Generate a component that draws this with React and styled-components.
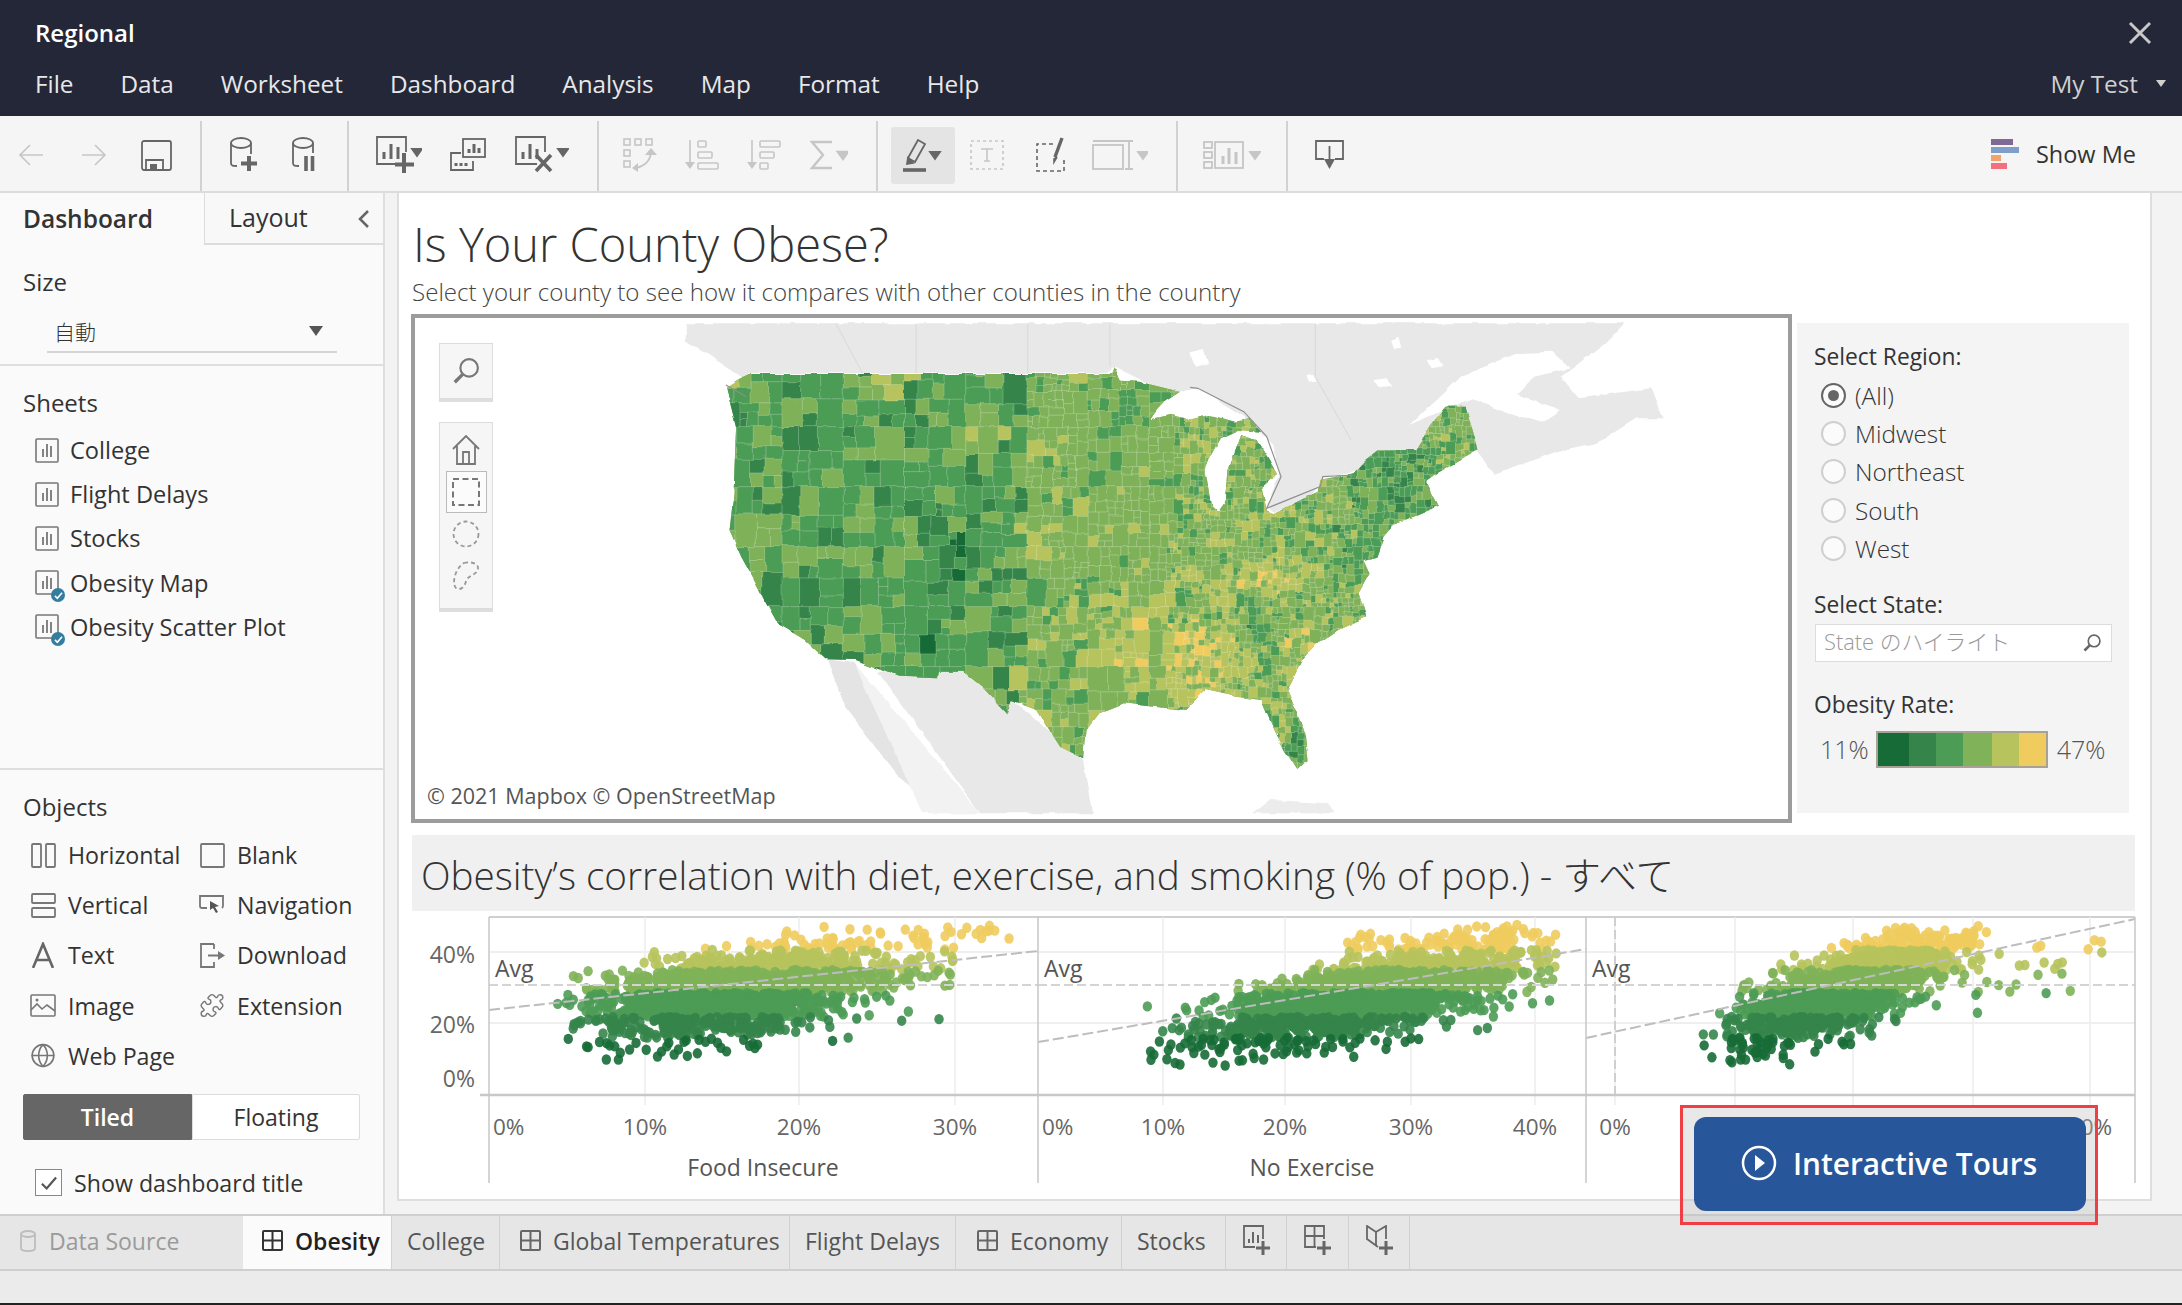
import styled, { createGlobalStyle } from "styled-components";
import { Globe, Puzzle } from "lucide-react";

const FONT = `"Open Sans", "Noto Sans CJK JP", sans-serif`;
const PALETTE = ["#176b36", "#35854b", "#4c9c55", "#7fb259", "#b7c35c", "#f0cc5e"];

const GlobalStyle = createGlobalStyle`
  html, body {
    margin: 0;
    padding: 0;
    width: 2182px;
    height: 1305px;
    overflow: hidden;
    background: #f3f3f3;
    font-family: ${FONT};
    color: #333;
  }
  * { box-sizing: border-box; }
`;

const Page = styled.div`
  position: relative;
  width: 2182px;
  height: 1305px;
  display: flex;
  flex-direction: column;
  border-bottom: 2px solid #222;
  overflow: hidden;
`;

/* ---------- top bar ---------- */
const TopBar = styled.header`
  height: 116px;
  flex: none;
  background: #232738;
  color: #fff;
  padding: 0 16px 0 35px;
  display: flex;
  flex-direction: column;
`;

const TitleRow = styled.div`
  height: 65px;
  display: flex;
  align-items: center;
  justify-content: space-between;
`;

const AppTitle = styled.div`
  font-size: 24px;
  font-weight: 600;
  margin-top: -1px;
`;

const CloseIcon = styled.svg`
  width: 24px;
  height: 24px;
  margin-right: 14px;
`;

const MenuRow = styled.nav`
  height: 36px;
  display: flex;
  align-items: center;
  gap: 47px;
  font-size: 24.3px;
  color: #e8e8e8;
`;

const UserMenu = styled.div`
  margin-left: auto;
  display: flex;
  align-items: center;
  gap: 18px;
  color: #d0d0d0;

  &::after {
    content: "";
    border-left: 5px solid transparent;
    border-right: 5px solid transparent;
    border-top: 7px solid #d0d0d0;
  }
`;

/* ---------- tool bar ---------- */
const ToolBar = styled.div`
  height: 77px;
  flex: none;
  background: #f5f5f5;
  display: flex;
  align-items: flex-start;
  border-bottom: 2px solid #dcdcdc;
`;

const ToolSlot = styled.div`
  width: ${(p) => p.$w}px;
  height: 76px;
  padding-top: 2px;
  flex: none;
  display: flex;
  align-items: center;
  justify-content: center;
`;

const ToolSep = styled.div`
  width: ${(p) => 2 + (p.$pad || 0)}px;
  height: 70px;
  margin-top: 5px;
  flex: none;
  border-right: 2px solid #d2d2d2;
`;

const HighlightBox = styled.div`
  width: 64px;
  height: 57px;
  margin: 11px 0 0 13px;
  flex: none;
  background: #e4e4e4;
  border-radius: 3px;
  display: flex;
  align-items: center;
  justify-content: center;
`;

const ShowMe = styled.div`
  margin: 0 46px 0 auto;
  height: 76px;
  display: flex;
  align-items: center;
  gap: 17px;
  font-size: 23.5px;
  color: #333;
`;

const ShowMeBars = styled.div`
  width: 28px;
  display: flex;
  flex-direction: column;
  gap: 2px;
`;

const ShowMeBar = styled.div`
  height: 6px;
  width: ${(p) => p.$w}px;
  background: ${(p) => p.$c};
`;

/* ---------- main ---------- */
const Main = styled.div`
  height: 1021px;
  flex: none;
  display: flex;
  align-items: flex-start;
  background: #f3f3f3;
`;

const SidePanel = styled.aside`
  width: 385px;
  height: 1021px;
  flex: none;
  background: #fafafa;
  border-right: 2px solid #dedede;
  display: flex;
  flex-direction: column;
`;

const SideTabs = styled.div`
  height: 52px;
  display: flex;
  flex: none;
`;

const SideTab = styled.div`
  width: ${(p) => (p.$active ? 204 : 179)}px;
  padding: 0 0 2px ${(p) => (p.$active ? 23 : 24)}px;
  font-size: ${(p) => (p.$active ? 24.5 : 25)}px;
  display: flex;
  align-items: center;
  position: relative;
  font-weight: ${(p) => (p.$active ? 600 : 400)};
  ${(p) => !p.$active && "border-left: 1px solid #dcdcdc; border-bottom: 2px solid #dcdcdc; background: #f8f8f8;"}
`;

const Collapse = styled.svg`
  position: absolute;
  right: 13px;
  top: 16px;
  width: 12px;
  height: 20px;
`;

const SideSection = styled.section`
  height: ${(p) => p.$h}px;
  flex: none;
  padding-top: ${(p) => p.$top || 0}px;
  ${(p) => p.$line && "border-bottom: 2px solid #dedede;"}
`;

const SideLabel = styled.div`
  font-size: 24px;
  font-weight: 500;
  height: 30px;
  line-height: 30px;
  padding-left: 23px;
  color: #333;
`;

const SizeSelect = styled.div`
  margin: 15px 46px 0 47px;
  height: 41px;
  border-bottom: 2px solid #d4d4d4;
  display: flex;
  align-items: center;
  justify-content: space-between;
  padding: 0 14px 2px 7px;
  font-size: 21px;
  font-weight: 300;

  &::after {
    content: "";
    border-left: 7px solid transparent;
    border-right: 7px solid transparent;
    border-top: 10px solid #555;
  }
`;

const SheetList = styled.div`
  margin-top: 10px;
  display: flex;
  flex-direction: column;
`;

const SheetRow = styled.div`
  height: 44.2px;
  display: flex;
  align-items: center;
  gap: 11px;
  padding-left: 35px;
  font-size: 23.6px;
`;

const SheetIconWrap = styled.div`
  position: relative;
  width: 24px;
  height: 25px;
  flex: none;
`;

const Badge = styled.div`
  position: absolute;
  right: -6px;
  bottom: -7px;
  width: 14px;
  height: 14px;
  border-radius: 50%;
  background: #357d9f;
  display: flex;
  align-items: center;
  justify-content: center;
`;

const ObjectGrid = styled.div`
  margin-top: 8px;
  padding-left: 30px;
  display: grid;
  grid-template-columns: 169px 170px;
  grid-auto-rows: 50.2px;
`;

const ObjectItem = styled.div`
  display: flex;
  align-items: center;
  gap: 12px;
  font-size: 23.2px;
  white-space: nowrap;
`;

const ObjectIcon = styled.div`
  width: 26px;
  height: 30px;
  flex: none;
  display: flex;
  align-items: center;
  justify-content: center;
`;

const Toggle = styled.div`
  margin: 13px 0 0 23px;
  width: 337px;
  height: 46px;
  display: flex;
  font-size: 23px;
`;

const ToggleOption = styled.div`
  flex: ${(p) => (p.$on ? "0 0 169px" : "1")};
  display: flex;
  align-items: center;
  justify-content: center;
  background: ${(p) => (p.$on ? "#666" : "#fff")};
  color: ${(p) => (p.$on ? "#fff" : "#333")};
  font-weight: ${(p) => (p.$on ? 600 : 400)};
  border: 1px solid ${(p) => (p.$on ? "#666" : "#dcdcdc")};
  border-radius: ${(p) => (p.$on ? "2px 0 0 2px" : "0 2px 2px 0")};
`;

const TitleCheck = styled.div`
  margin: 27px 0 0 35px;
  display: flex;
  align-items: center;
  gap: 12px;
  font-size: 23.2px;
`;

const CheckBox = styled.div`
  width: 27px;
  height: 27px;
  background: #fff;
  border: 1.5px solid #888;
  display: flex;
  align-items: center;
  justify-content: center;
`;

/* ---------- dashboard canvas ---------- */
const Canvas = styled.main`
  width: 1755px;
  height: 1008px;
  margin-left: 12px;
  background: #fff;
  border: 2px solid #dedede;
  border-top: 0;
  display: flex;
  flex-direction: column;
  padding-left: 12px;
`;

const Heading = styled.div`
  height: 121px;
  flex: none;
  padding-left: 1px;
  display: flex;
  flex-direction: column;
`;

const DashTitle = styled.h1`
  margin: 23px 0 0 1px;
  font-size: 47px;
  line-height: 56px;
  font-weight: 300;
  color: #333;
`;

const DashSub = styled.div`
  margin-top: 5px;
  font-size: 24.1px;
  line-height: 30px;
  font-weight: 300;
  color: #444;
`;

const MapRow = styled.div`
  display: flex;
  align-items: flex-start;
  flex: none;
`;

const MapFrame = styled.div`
  position: relative;
  width: 1381px;
  height: 509px;
  flex: none;
  border: 4px solid #9c9c9c;
  overflow: hidden;
  background: #fff;
`;

const MapSvg = styled.svg`
  display: block;
`;

const ToolCard = styled.div`
  position: absolute;
  left: 24px;
  top: ${(p) => p.$top}px;
  width: 54px;
  height: ${(p) => p.$h}px;
  padding-top: ${(p) => p.$padTop || 0}px;
  background: #f6f6f6;
  border: 1px solid #dcdcdc;
  box-shadow: 0 3px 0 #dedede;
  display: flex;
  flex-direction: column;
  align-items: center;
  justify-content: ${(p) => p.$justify || "center"};
`;

const MapToolBtn = styled.div`
  width: 41px;
  height: 42px;
  flex: none;
  display: flex;
  align-items: center;
  justify-content: center;
  border: 1px solid ${(p) => (p.$on ? "#bbb" : "transparent")};
  background: ${(p) => (p.$on ? "#fbfbfb" : "transparent")};
`;

const Attribution = styled.div`
  position: absolute;
  left: 9px;
  bottom: 8px;
  padding: 0 3px;
  font-size: 21.5px;
  line-height: 30px;
  color: #555;
  background: rgba(255, 255, 255, 0.75);
`;

const FilterPanel = styled.div`
  width: 332px;
  height: 490px;
  margin: 9px 0 0 5px;
  padding: 20px 0 0 17px;
  background: #f4f4f4;
  flex: none;
`;

const FilterLabel = styled.div`
  font-size: 22.8px;
  line-height: 28px;
  font-weight: 500;
  color: #333;
  margin-top: ${(p) => p.$mt || 0}px;
`;

const RadioRow = styled.div`
  height: 38.4px;
  display: flex;
  align-items: center;
  gap: 9px;
  padding-left: 7px;
  font-size: 24.3px;
  font-weight: 300;
  color: #333;
`;

const RadioDot = styled.div`
  width: 25px;
  height: 25px;
  border-radius: 50%;
  background: #fbfbfb;
  border: 2.5px solid ${(p) => (p.$on ? "#666" : "#cfcfcf")};
  display: flex;
  align-items: center;
  justify-content: center;

  &::after {
    content: "";
    width: 11px;
    height: 11px;
    border-radius: 50%;
    background: ${(p) => (p.$on ? "#666" : "transparent")};
  }
`;

const RadioList = styled.div`
  margin-top: 5px;
`;

const StateInput = styled.div`
  width: 297px;
  height: 38px;
  margin: 5px 0 0 1px;
  background: #fff;
  border: 1px solid #dcdcdc;
  display: flex;
  align-items: center;
  justify-content: space-between;
  padding: 0 9px 4px 8px;
  font-size: 21.8px;
  font-weight: 300;
  color: #9a9a9a;

  svg {
    margin-top: 4px;
  }
`;

const LegendRow = styled.div`
  margin-top: 12px;
  display: flex;
  align-items: center;
  padding-left: 6px;
  font-size: 25px;
  font-weight: 300;
  color: #555;
`;

const LegendBar = styled.div`
  width: 172px;
  height: 37px;
  margin: 0 9px 0 7px;
  border: 2px solid #a8a296;
  display: flex;
`;

const LegendStep = styled.div`
  flex: 0 0 ${(p) => p.$w}px;
  background: ${(p) => p.$c};
`;

const CorrelationTitle = styled.div`
  width: 1723px;
  height: 76px;
  margin: 12px 0 0 1px;
  padding-left: 9px;
  flex: none;
  display: flex;
  align-items: center;
  background: #f0f0f0;
  font-size: 38.7px;
  font-weight: 300;
  color: #333;
  white-space: nowrap;
`;

const ChartSvg = styled.svg`
  display: block;
  flex: none;
  font-family: ${FONT};
`;

/* ---------- sheet tabs ---------- */
const TabBar = styled.div`
  height: 57px;
  flex: none;
  display: flex;
  background: #e6e6e6;
  border-top: 2px solid #cfcfcf;
  border-bottom: 2px solid #cfcfcf;
  font-size: 23px;
  color: #555;
`;

const DataSourceTab = styled.div`
  width: 243px;
  flex: none;
  padding: 0 0 4px 20px;
  display: flex;
  align-items: center;
  gap: 13px;
  color: #9a9a9a;
`;

const SheetTab = styled.div`
  width: ${(p) => p.$w}px;
  flex: none;
  display: flex;
  align-items: center;
  gap: 12px;
  padding: 0 0 4px ${(p) => p.$pad ?? 15}px;
  border-right: 1px solid #d2d2d2;
  background: ${(p) => (p.$active ? "#fbfbfb" : "transparent")};
  color: ${(p) => (p.$active ? "#222" : "#555")};
  font-weight: ${(p) => (p.$active ? 600 : 400)};
  white-space: nowrap;
`;

const StatusBar = styled.div`
  flex: 1;
  background: #ebebeb;
`;

/* ---------- overlay button ---------- */
const TourFrame = styled.div`
  position: absolute;
  left: 1680px;
  top: 1105px;
  width: 418px;
  height: 120px;
  border: 3px solid #ef3f45;
  padding: 9px 9px 11px 11px;
  background: rgba(190, 190, 190, 0.35);
`;

const TourButton = styled.div`
  height: 100%;
  border-radius: 12px;
  background: #27569a;
  color: #fff;
  display: flex;
  align-items: center;
  padding: 0 0 2px 47px;
  gap: 16px;
  font-size: 29.8px;
  font-weight: 600;
  white-space: nowrap;
`;

/* ---------- seeded data ---------- */
function seeded(a) {
  return () => {
    a |= 0;
    a = (a + 0x6d2b79f5) | 0;
    let t = Math.imul(a ^ (a >>> 15), 1 | a);
    t = (t + Math.imul(t ^ (t >>> 7), 61 | t)) ^ t;
    return ((t ^ (t >>> 14)) >>> 0) / 4294967296;
  };
}

const bump = (x, y, cx, cy, rx, ry, amp) =>
  amp * Math.exp(-(((x - cx) / rx) ** 2 + ((y - cy) / ry) ** 2));

function countyValue(x, y) {
  let v = x < 670 ? 2.35 : 2.95;
  v += bump(x, y, 545, 590, 60, 110, -1.7);
  v += bump(x, y, 430, 270, 40, 120, -1.1);
  v += bump(x, y, 200, 770, 70, 90, -0.7);
  v += bump(x, y, 500, 840, 70, 80, -0.6);
  v += bump(x, y, 980, 880, 170, 140, 1.25);
  v += bump(x, y, 1150, 650, 70, 50, 1.3);
  v += bump(x, y, 1130, 800, 40, 70, -1.4);
  v += bump(x, y, 1240, 850, 40, 70, 0.9);
  v += bump(x, y, 1400, 380, 90, 120, -1.4);
  v += bump(x, y, 1310, 590, 40, 60, -1.1);
  v += bump(x, y, 1210, 1150, 25, 80, -0.9);
  v += bump(x, y, 770, 1010, 50, 50, -0.7);
  v += bump(x, y, 690, 250, 30, 60, 0.9);
  v += bump(x, y, 870, 160, 70, 60, -0.5);
  return v;
}

function buildCounties() {
  const rand = seeded(20210);
  const paths = PALETTE.map(() => []);
  const split = (x, y, w, h) => {
    const target = x < 660 ? 40 : x < 950 ? 25 : 15;
    if (w > target * (0.75 + rand() * 0.8)) {
      const k = 0.35 + rand() * 0.3;
      if (w * 1.5 > h) {
        split(x, y, w * k, h);
        split(x + w * k, y, w * (1 - k), h);
      } else {
        split(x, y, w, h * k);
        split(x, y + h * k, w, h * (1 - k));
      }
      return;
    }
    if (h > w * 2.6) {
      split(x, y, w, h / 2);
      split(x, y + h / 2, w, h / 2);
      return;
    }
    const cx = x + w / 2;
    const span = cx < 670 ? 1.7 : cx < 950 && y < 650 ? 0.9 : 1.45;
    const noise = (rand() + rand() - 1) * span;
    const idx = Math.max(0, Math.min(5, Math.round(countyValue(cx, y + h / 2) + noise)));
    paths[idx].push(`M${x.toFixed(1)} ${y.toFixed(1)}h${w.toFixed(1)}v${h.toFixed(1)}h${(-w).toFixed(1)}z`);
  };
  for (let x = 80; x < 1570; x += 120) {
    for (let y = 20; y < 1240; y += 180) split(x, y, 120, 180);
  }
  return paths.map((p) => p.join(""));
}

const COUNTIES = buildCounties();

const gauss = (rand) => (rand() + rand() + rand() + rand() - 2) * 1.7;

function bandColor(y) {
  if (y < 950) return PALETTE[5];
  if (y < 970) return PALETTE[4];
  if (y < 993) return PALETTE[3];
  if (y < 1017) return PALETTE[2];
  if (y < 1038) return PALETTE[1];
  return PALETTE[0];
}

function buildDots(seed, spec) {
  const rand = seeded(seed);
  const out = [];
  const line = (x) => spec.y0 + (x - spec.x0) * spec.m;
  for (let i = 0; i < spec.n; i++) {
    const x = spec.x0 + gauss(rand) * spec.sx;
    out.push([x, line(x) + gauss(rand) * spec.sy]);
  }
  // sparse marks running off to the right of the main cloud
  for (let i = 0; i < spec.tail; i++) {
    const x = spec.t0 + rand() * (spec.t1 - spec.t0);
    out.push([x, line(x) + gauss(rand) * spec.ty + spec.tyOff]);
  }
  // the yellow marks along the top edge
  for (let i = 0; i < spec.crown[4]; i++) {
    const x = spec.crown[0] + rand() * (spec.crown[1] - spec.crown[0]);
    out.push([x, spec.crown[2] + (x - spec.crown[0]) * spec.crown[3] + gauss(rand) * 7]);
  }
  for (let i = 0; i < spec.low; i++) {
    const x = spec.x0 + gauss(rand) * spec.sx * 1.1;
    out.push([x, line(x) + 30 + rand() * 30]);
  }
  const kept = out.filter(([x, y]) => y > 925 && y < 1068 && x > spec.xMin && x < spec.xMax);
  kept.sort((a, b) => a[1] - b[1]);
  return kept;
}

const PANELS = [
  {
    left: 489,
    ticks: [[493, "0%", "start"], [645, "10%"], [799, "20%"], [955, "30%"]],
    title: "Food Insecure",
    titleX: 763,
    avgX: 495,
    trend: [489, 1010, 1038, 951],
    dots: buildDots(11, { x0: 735, y0: 992, m: -0.11, n: 1700, sx: 72, sy: 19, tail: 30, t0: 860, t1: 960, ty: 12, tyOff: -4, low: 40, xMin: 555, xMax: 1012, crown: [780, 1010, 950, -0.1, 60] }),
  },
  {
    left: 1038,
    ticks: [[1042, "0%", "start"], [1163, "10%"], [1285, "20%"], [1411, "30%"], [1535, "40%"]],
    title: "No Exercise",
    titleX: 1312,
    avgX: 1044,
    trend: [1038, 1042, 1586, 949],
    dots: buildDots(23, { x0: 1370, y0: 995, m: -0.22, n: 1800, sx: 80, sy: 18, tail: 40, t0: 1150, t1: 1555, ty: 10, tyOff: 2, low: 25, xMin: 1144, xMax: 1558, crown: [1340, 1530, 948, -0.09, 60] }),
  },
  {
    left: 1586,
    // the other labels of this panel lie under the Interactive Tours button
    ticks: [[1615, "0%"], [1735], [1853], [1973], [2090, "40%"]],
    avgX: 1592,
    trend: [1586, 1038, 2135, 919],
    avgV: 1615,
    dots: buildDots(37, { x0: 1845, y0: 988, m: -0.36, n: 1500, sx: 55, sy: 18, tail: 24, t0: 1970, t1: 2105, ty: 16, tyOff: 50, low: 25, xMin: 1695, xMax: 2110, crown: [1860, 1975, 945, -0.06, 45] }),
  },
];

/* ---------- icons ---------- */
const ON = "#666";
const OFF = "#c6c6c6";

const Caret = ({ x, y, c }) => <path d={`M${x} ${y}h10l-5 7z`} fill={c} />;

const ArrowIcon = ({ flip }) => (
  <svg width="26" height="24" viewBox="0 0 26 24" fill="none" stroke={OFF} strokeWidth="1.6" style={flip ? { transform: "scaleX(-1)" } : undefined}>
    <path d="M25 12H2M12 2 2 12l10 10" />
  </svg>
);

const SaveIcon = () => (
  <svg width="31" height="31" viewBox="0 0 31 31" fill="none" stroke={ON} strokeWidth="1.8">
    <rect x="1" y="1" width="29" height="29" rx="2" />
    <path d="M5 30V20h17v10" />
    <rect x="9" y="24" width="7" height="6" fill={ON} stroke="none" />
  </svg>
);

const DbAddIcon = () => (
  <svg width="30" height="36" viewBox="0 0 30 36" fill="none" stroke={ON} strokeWidth="1.8">
    <ellipse cx="11" cy="6" rx="10" ry="5" />
    <path d="M1 6v20c0 3 2 3 6 3M21 6v11" />
    <path d="M19 19v15M11 26.5h16" strokeWidth="4" />
  </svg>
);

const DbPauseIcon = () => (
  <svg width="24" height="36" viewBox="0 0 24 36" fill="none" stroke={ON} strokeWidth="1.8">
    <ellipse cx="11" cy="6" rx="10" ry="5" />
    <path d="M1 6v20c0 3 2 3 6 3M21 6v10" />
    <path d="M14 19v15M20.500 19v15" strokeWidth="3.600" />
  </svg>
);

const SheetAddIcon = () => (
  <svg width="46" height="38" viewBox="0 0 46 38" fill="none" stroke={ON} strokeWidth="1.8">
    <path d="M22 28H1V1h29v15" />
    <path d="M8 23v-7M15 23V8M22 23V11" strokeWidth="3" />
    <path d="M28 17v20M19 28.500h19" strokeWidth="4" />
    <Caret x={36} y={13} c={ON} />
  </svg>
);

const DuplicateIcon = () => (
  <svg width="36" height="34" viewBox="0 0 36 34" fill="none" stroke={ON} strokeWidth="1.8">
    <rect x="13" y="1" width="22" height="18" />
    <path d="M19 15V11M24 15V6M29 15V10" strokeWidth="3" />
    <path d="M11 15H1v17h22v-9" />
    <path d="M6 28v-3M11 28v-3M16 28v-3" strokeWidth="3" />
  </svg>
);

const SheetClearIcon = () => (
  <svg width="54" height="38" viewBox="0 0 54 38" fill="none" stroke={ON} strokeWidth="1.8">
    <path d="M22 28H1V1h29v15" />
    <path d="M8 23v-7M15 23V8M22 23V13" strokeWidth="3" />
    <path d="m21 19 15 16M36 19 21 35" strokeWidth="3.600" />
    <Caret x={43} y={13} c={ON} />
  </svg>
);

const SwapIcon = () => (
  <svg width="36" height="34" viewBox="0 0 36 34" fill="none" stroke={OFF} strokeWidth="1.6">
    <rect x="1" y="1" width="6" height="6" />
    <rect x="12" y="1" width="6" height="6" />
    <rect x="23" y="1" width="6" height="6" />
    <rect x="1" y="12" width="6" height="6" />
    <rect x="1" y="23" width="6" height="6" />
    <path d="M28 13c0 9-6 15-15 17" strokeWidth="2" />
    <path d="m22 17 6-7 6 7zM15 25l-6 5 6 4z" fill={OFF} stroke="none" />
  </svg>
);

const SortIcon = ({ desc }) => (
  <svg width="34" height="30" viewBox="0 0 34 30" fill="none" stroke={OFF} strokeWidth="1.600">
    <path d="M5 0v26" />
    <path d="m0 22 5 7 5-7z" fill={OFF} stroke="none" />
    <rect x="13" y={desc ? 23 : 1} width="8" height="6" rx="1" />
    <rect x="13" y="12" width="14" height="6" rx="1" />
    <rect x="13" y={desc ? 1 : 23} width="20" height="6" rx="1" />
  </svg>
);

const SumIcon = () => (
  <svg width="38" height="30" viewBox="0 0 38 30" fill="none" stroke={OFF} strokeWidth="2.400">
    <path d="M22 2H2l11 13L2 28h20" />
    <Caret x={28} y={12} c={OFF} />
  </svg>
);

const HighlighterIcon = () => (
  <svg width="40" height="34" viewBox="0 0 40 34" fill="none" stroke={ON} strokeWidth="1.800">
    <path d="M15 1 22 5 12 23l-7-4z" />
    <path d="m5 19 5 5-6 1z" fill={ON} />
    <path d="M0 31h23" strokeWidth="3.600" />
    <Caret x={27} y={13} c={ON} />
  </svg>
);

const TextBoxIcon = () => (
  <svg width="34" height="30" viewBox="0 0 34 30" fill="none" stroke={OFF} strokeWidth="1.600">
    <rect x="1" y="1" width="32" height="28" strokeDasharray="3 3" />
    <path d="M11 9h12M17 9v12M14 21h6" />
  </svg>
);

const AnnotateIcon = () => (
  <svg width="30" height="36" viewBox="0 0 30 36" fill="none" stroke={ON} strokeWidth="1.600">
    <path d="M17 7H1v27h27V20" strokeDasharray="4 3" stroke={ON} />
    <path d="m26 1-7 19" strokeWidth="3.400" />
    <path d="m18 22 3-2-3 5z" fill={ON} />
  </svg>
);

const FitIcon = () => (
  <svg width="56" height="30" viewBox="0 0 56 30" fill="none" stroke={OFF} strokeWidth="1.800">
    <rect x="1" y="5" width="30" height="24" />
    <path d="M1 1h36M37 1v28M33 1h8M33 29h8" />
    <Caret x={46} y={12} c={OFF} />
  </svg>
);

const CardsIcon = () => (
  <svg width="58" height="28" viewBox="0 0 58 28" fill="none" stroke={OFF} strokeWidth="1.800">
    <rect x="1" y="1" width="8" height="6" />
    <rect x="1" y="11" width="8" height="6" />
    <rect x="1" y="21" width="8" height="6" />
    <rect x="12" y="1" width="28" height="26" />
    <path d="M20 23v-8M26 23V7M33 23V11" strokeWidth="3" />
    <Caret x={47} y={11} c={OFF} />
  </svg>
);

const PresentIcon = () => (
  <svg width="30" height="30" viewBox="0 0 30 30" fill="none" stroke={ON} strokeWidth="1.800">
    <path d="M9 19H1V1h27v18h-8M14.500 6v16" />
    <path d="m9 19 5.500 10L20 19z" fill={ON} stroke="none" />
  </svg>
);

const SheetIcon = () => (
  <svg width="24" height="25" viewBox="0 0 24 25" fill="none" stroke="#777" strokeWidth="1.600">
    <rect x="1" y="1" width="22" height="23" rx="1" />
    <path d="M8 19v-8M12 19V6M16 19V8" strokeWidth="1.800" />
  </svg>
);

const TickMini = ({ size, color, sw }) => (
  <svg width={size} height={size} viewBox="0 0 14 14" fill="none" stroke={color} strokeWidth={sw}>
    <path d="m2.500 7.500 3 3 6-7" />
  </svg>
);

const HorizontalIcon = () => (
  <svg width="25" height="25" viewBox="0 0 25 25" fill="none" stroke="#777" strokeWidth="1.800">
    <rect x="1" y="1" width="9" height="23" rx="1" />
    <rect x="15" y="1" width="9" height="23" rx="1" />
  </svg>
);
const VerticalIcon = () => (
  <svg width="25" height="25" viewBox="0 0 25 25" fill="none" stroke="#777" strokeWidth="1.800">
    <rect x="1" y="1" width="23" height="9" rx="1" />
    <rect x="1" y="15" width="23" height="9" rx="1" />
  </svg>
);
const BlankIcon = () => (
  <svg width="25" height="25" viewBox="0 0 25 25" fill="none" stroke="#777" strokeWidth="1.800">
    <rect x="1" y="1" width="23" height="23" rx="1" />
  </svg>
);
const NavIcon = () => (
  <svg width="26" height="20" viewBox="0 0 26 20" fill="none" stroke="#777" strokeWidth="1.800">
    <path d="M8 13H3q-2 0-2-2V1h23v10q0 1-1 2" />
    <path d="m11 6 9 5-4 1 3 5-2 1-3-5-3 2z" fill="#555" stroke="none" />
  </svg>
);
const TextIcon = () => (
  <svg width="22" height="26" viewBox="0 0 22 26" fill="none" stroke="#666" strokeWidth="2.600">
    <path d="m1 26 10-24 10 24M5 18h12" />
  </svg>
);
const DownloadIcon = () => (
  <svg width="26" height="25" viewBox="0 0 26 25" fill="none" stroke="#777" strokeWidth="1.800">
    <path d="M15 1H2v23h13V19M9 12.500h11" />
    <path d="m19 8 7 4.500-7 4.500z" fill="#777" stroke="none" />
    <path d="M15 1v5" />
  </svg>
);
const ImageIcon = () => (
  <svg width="26" height="23" viewBox="0 0 26 23" fill="none" stroke="#777" strokeWidth="1.600">
    <rect x="1" y="1" width="24" height="21" rx="1" />
    <path d="m1 16 6-6 5 5 5-4 8 6" />
    <circle cx="7" cy="6" r="1.500" fill="#777" stroke="none" />
  </svg>
);

const SearchGlass = ({ size, color, sw }) => (
  <svg width={size} height={size} viewBox="0 0 24 24" fill="none" stroke={color} strokeWidth={sw}>
    <circle cx="14.500" cy="9.500" r="7" />
    <path d="M9.500 14.500 3 21" strokeWidth={sw * 1.6} />
  </svg>
);

const HomeIcon = () => (
  <svg width="28" height="30" viewBox="0 0 28 30" fill="none" stroke="#777" strokeWidth="1.800">
    <path d="M1 14 14 1l13 13M5 11v18h18V11M11 29V17h6v12" />
  </svg>
);

const MarqueeIcon = () => (
  <svg width="28" height="28" viewBox="0 0 28 28" fill="none" stroke="#777" strokeWidth="2">
    <rect x="1" y="1" width="26" height="26" strokeDasharray="6 3.500" />
  </svg>
);

const RadialIcon = () => (
  <svg width="28" height="28" viewBox="0 0 28 28" fill="none" stroke="#999" strokeWidth="1.800">
    <circle cx="14" cy="14" r="12.500" strokeDasharray="4 3" />
  </svg>
);

const LassoIcon = () => (
  <svg width="28" height="30" viewBox="0 0 28 30" fill="none" stroke="#999" strokeWidth="1.800">
    <path d="M12 2c8-2 15 1 14 6-1 6-10 6-12 12-1 6-6 10-10 7C0 24 2 8 12 2z" strokeDasharray="4 3" />
  </svg>
);

const TabGrid = ({ color = "#666" }) => (
  <svg width="21" height="21" viewBox="0 0 21 21" fill="none" stroke={color} strokeWidth="2">
    <rect x="1" y="1" width="19" height="19" rx="1" />
    <path d="M10.500 1v19M1 10.500h19" />
  </svg>
);

const DbSmall = () => (
  <svg width="16" height="22" viewBox="0 0 16 22" fill="none" stroke="#bdbdbd" strokeWidth="1.800">
    <ellipse cx="8" cy="4" rx="7" ry="3" />
    <path d="M1 4v14c0 4 14 4 14 0V4" />
  </svg>
);

const NewSheetIcon = () => (
  <svg width="30" height="32" viewBox="0 0 30 32" fill="none" stroke="#666" strokeWidth="1.800">
    <path d="M12 22H1V1h19v13" />
    <path d="M6 18v-4M10 18V7M15 18V10" strokeWidth="2" />
    <path d="M20 16v14M13 23h14" strokeWidth="3" />
  </svg>
);

const NewDashIcon = () => (
  <svg width="30" height="32" viewBox="0 0 30 32" fill="none" stroke="#666" strokeWidth="1.800">
    <path d="M12 22H1V1h19v13M10.500 1v21M1 11h19" />
    <path d="M20 16v14M13 23h14" strokeWidth="3" />
  </svg>
);

const NewStoryIcon = () => (
  <svg width="30" height="32" viewBox="0 0 30 32" fill="none" stroke="#666" strokeWidth="1.800">
    <path d="M12 22 1 14V1l9 6 10-6v13M10 7v13" />
    <path d="M20 16v14M13 23h14" strokeWidth="3" />
  </svg>
);

const PlayCircle = () => (
  <svg width="36" height="36" viewBox="0 0 36 36" fill="none" stroke="#fff" strokeWidth="2.500">
    <circle cx="18" cy="18" r="16" />
    <path d="m14 10 10 8-10 8z" fill="#fff" stroke="none" />
  </svg>
);

/* ---------- map ---------- */
const US_OUTLINE =
  "M90 80 112 60 135 42 845 42 850 22 862 62 900 65 980 95 950 125 935 150 922 178 960 165 1000 178 1040 165 1085 185 1120 178 1140 215 1095 210 1060 235 1040 290 1030 330 1040 430 1055 452 1070 420 1075 330 1100 225 1130 240 1150 290 1170 345 1140 385 1150 450 1165 460 1210 425 1250 395 1255 360 1320 340 1345 300 1370 270 1442 270 1470 200 1500 140 1540 140 1565 270 1520 310 1480 345 1462 365 1487 440 1440 470 1400 490 1380 525 1365 590 1340 600 1352 640 1330 700 1345 770 1290 810 1250 850 1220 900 1190 990 1210 1060 1225 1130 1230 1200 1210 1230 1185 1170 1165 1110 1140 1020 1090 1010 1030 990 990 1050 930 1040 870 1030 820 1060 795 1110 790 1195 745 1160 720 1100 700 1050 650 1020 640 1060 595 985 555 935 510 935 505 955 430 950 345 900 285 898 245 840 190 790 165 720 145 660 120 590 97 510 105 400 110 200z";

const CountyMap = () => (
  <MapSvg width="1373" height="501" viewBox="415 318 1373 501">
    <defs>
      <clipPath id="us-clip">
        <path d={US_OUTLINE} />
      </clipPath>
      <filter id="rough" filterUnits="userSpaceOnUse" x="415" y="318" width="1373" height="501">
        <feTurbulence type="fractalNoise" baseFrequency="0.05" numOctaves="3" seed="4" result="n" />
        <feDisplacementMap in="SourceGraphic" in2="n" scale="5" xChannelSelector="R" yChannelSelector="G" />
      </filter>
    </defs>
    <g filter="url(#rough)">
      <g transform="translate(400 310) scale(0.893 0.3333)">
        <path
          d="M320 40H1370L1345 110 1300 200 1320 265 1400 235 1415 325 1385 325 1340 400 1300 420 1225 495 1207 425 1100 420 1075 480 1035 500 1020 560 980 605 970 590 985 490 975 400 945 320 895 235 860 250 800 170 790 190H390L385 205 320 90z"
          fill="#e8e8e8"
        />
        <path d="M1130 345 1165 260 1190 195 1250 130 1290 125 1310 175 1270 200 1250 255 1300 300 1280 335 1240 310 1200 265z" fill="#fff" />
        <path d="M885 130 900 120 905 160 890 170zM1090 210l15-5 5 25-15 5zM1150 150l12-6 6 25-14 6zM1016 195l8-3 3 20-8 3zM1110 90l8-10 3 30-8 4z" fill="#fff" />
        <path d="M478 1048 510 1060 520 1120 590 1470 558 1400 500 1200z" fill="#e4e4e4" />
        <path d="M510 1060 650 1510H585L520 1130z" fill="#f2f2f2" />
        <path d="M535 1085 640 1085 700 1200 765 1350 775 1510H650z" fill="#e8e8e8" />
        <path d="M955 1510 975 1470 1040 1480 1045 1510z" fill="#ececec" />
      </g>
      <g transform="translate(680 360) scale(0.5102 0.3333)">
        <path d={US_OUTLINE} fill="#7fb259" />
        <g clipPath="url(#us-clip)">
          {COUNTIES.map((d, i) => (
            <path key={PALETTE[i]} d={d} fill={PALETTE[i]} stroke="rgba(255,255,255,.2)" strokeWidth="0.700" vectorEffect="non-scaling-stroke" />
          ))}
        </g>
      </g>
    </g>
    <g transform="translate(400 310) scale(0.893 0.3333)" fill="none" stroke="#cdcdcd" strokeWidth="1" vectorEffect="non-scaling-stroke">
      <path d="M578 40v150M703 40v150M795 40v130M1025 40v160l40 190M488 40l30 150" />
    </g>
    <g transform="translate(680 360) scale(0.5102 0.3333)">
      <path d="M1000 82 1015 85 1105 155 1150 230 1178 350 1150 445 1255 380 1260 350 1320 345M90 75 130 110" fill="none" stroke="#8f8f8f" strokeWidth="1.200" vectorEffect="non-scaling-stroke" />
    </g>
  </MapSvg>
);

/* ---------- scatter ---------- */
const ScatterPanel = ({ panel }) => (
  <g>
    {panel.ticks.map(([x], i) =>
      i === 0 && !panel.avgV ? null : <path key={x} d={`M${x} 917V1105`} stroke="#ececec" strokeWidth="1.500" />
    )}
    <path d={`M${panel.left} 952H${panel.left + 549}M${panel.left} 1023H${panel.left + 549}`} stroke="#efefef" strokeWidth="2" />
    {panel.dots.map(([x, y], i) => (
      <ellipse key={i} cx={x} cy={y} rx="4.700" ry="5.200" fill={bandColor(y)} opacity="0.9" />
    ))}
    <path d={`M${panel.left} 985H${panel.left + 549}`} stroke="#d4d4d4" strokeWidth="2" strokeDasharray="9 4" />
    {panel.avgV && <path d={`M${panel.avgV} 917V1095`} stroke="#cfcfcf" strokeWidth="2" strokeDasharray="9 4" />}
    <path d={`M${panel.trend[0]} ${panel.trend[1]}L${panel.trend[2]} ${panel.trend[3]}`} stroke="#bdbdbd" strokeWidth="2" strokeDasharray="11 4" />
    <text x={panel.avgX} y="977" fontSize="23" fill="#555">Avg</text>
    {panel.ticks.map(([x, label, anchor]) =>
      label ? (
        <text key={label} x={x} y="1135" fontSize="22.500" fill="#666" textAnchor={anchor || "middle"}>{label}</text>
      ) : null
    )}
    {panel.title && (
      <text x={panel.titleX} y="1176" fontSize="23" fill="#555" textAnchor="middle">{panel.title}</text>
    )}
  </g>
);

const ScatterChart = () => (
  <ChartSvg width="1735" height="280" viewBox="411 911 1735 280">
    <path d="M489 917H2135" stroke="#cfcfcf" strokeWidth="2" />
    {PANELS.map((p) => (
      <ScatterPanel key={p.left} panel={p} />
    ))}
    <path d="M489 917V1183M1038 917V1183M1586 917V1183M2135 917V1183" stroke="#c8c8c8" strokeWidth="1.500" fill="none" />
    <path d="M480 1095H2135" stroke="#c8c8c8" strokeWidth="2.500" />
    {[["40%", 963], ["20%", 1033], ["0%", 1087]].map(([t, y]) => (
      <text key={t} x="475" y={y} fontSize="23" fill="#666" textAnchor="end">{t}</text>
    ))}
  </ChartSvg>
);

const MENU = ["File", "Data", "Worksheet", "Dashboard", "Analysis", "Map", "Format", "Help"];
const SHEETS = [
  ["College", false],
  ["Flight Delays", false],
  ["Stocks", false],
  ["Obesity Map", true],
  ["Obesity Scatter Plot", true],
];
const OBJECTS = [
  ["Horizontal", <HorizontalIcon key="h" />],
  ["Blank", <BlankIcon key="b" />],
  ["Vertical", <VerticalIcon key="v" />],
  ["Navigation", <NavIcon key="n" />],
  ["Text", <TextIcon key="t" />],
  ["Download", <DownloadIcon key="d" />],
  ["Image", <ImageIcon key="i" />],
  ["Extension", <Puzzle key="e" size={31} color="#777" strokeWidth={1.3} />],
  ["Web Page", <Globe key="w" size={27} color="#777" strokeWidth={1.5} />],
];
const REGIONS = ["(All)", "Midwest", "Northeast", "South", "West"];
const LEGEND = [31, 27, 27, 29, 27, 27];

export default function App() {
  return (
    <Page>
      <GlobalStyle />
      <TopBar>
        <TitleRow>
          <AppTitle>Regional</AppTitle>
          <CloseIcon viewBox="0 0 24 24" fill="none" stroke="#c8c8c8" strokeWidth="3">
            <path d="m2 2 20 20M22 2 2 22" />
          </CloseIcon>
        </TitleRow>
        <MenuRow>
          {MENU.map((m) => (
            <div key={m}>{m}</div>
          ))}
          <UserMenu>My Test</UserMenu>
        </MenuRow>
      </TopBar>

      <ToolBar>
        <ToolSlot $w={62}><ArrowIcon /></ToolSlot>
        <ToolSlot $w={64}><ArrowIcon flip /></ToolSlot>
        <ToolSlot $w={60}><SaveIcon /></ToolSlot>
        <ToolSep $pad={14} />
        <ToolSlot $w={86}><DbAddIcon /></ToolSlot>
        <ToolSlot $w={32}><DbPauseIcon /></ToolSlot>
        <ToolSep $pad={27} />
        <ToolSlot $w={100}><SheetAddIcon /></ToolSlot>
        <ToolSlot $w={38}><DuplicateIcon /></ToolSlot>
        <ToolSlot $w={110}><SheetClearIcon /></ToolSlot>
        <ToolSep />
        <ToolSlot $w={84}><SwapIcon /></ToolSlot>
        <ToolSlot $w={38}><SortIcon /></ToolSlot>
        <ToolSlot $w={86}><SortIcon desc /></ToolSlot>
        <ToolSlot $w={44}><SumIcon /></ToolSlot>
        <ToolSep $pad={25} />
        <HighlightBox><HighlighterIcon /></HighlightBox>
        <ToolSlot $w={63}><TextBoxIcon /></ToolSlot>
        <ToolSlot $w={65}><AnnotateIcon /></ToolSlot>
        <ToolSlot $w={74}><FitIcon /></ToolSlot>
        <ToolSep $pad={19} />
        <ToolSlot $w={108}><CardsIcon /></ToolSlot>
        <ToolSep />
        <ToolSlot $w={84}><PresentIcon /></ToolSlot>
        <ShowMe>
          <ShowMeBars>
            <ShowMeBar $w={22} $c="#7f6a97" />
            <ShowMeBar $w={28} $c="#7f9fc8" />
            <ShowMeBar $w={10} $c="#f2a26b" />
            <ShowMeBar $w={16} $c="#f4707f" />
          </ShowMeBars>
          Show Me
        </ShowMe>
      </ToolBar>

      <Main>
        <SidePanel>
          <SideTabs>
            <SideTab $active>Dashboard</SideTab>
            <SideTab>
              Layout
              <Collapse viewBox="0 0 12 20" fill="none" stroke="#666" strokeWidth="2.500">
                <path d="M10 2 2 10l8 8" />
              </Collapse>
            </SideTab>
          </SideTabs>
          <SideSection $h={121} $top={22} $line>
            <SideLabel>Size</SideLabel>
            <SizeSelect>自動</SizeSelect>
          </SideSection>
          <SideSection $h={404} $top={22} $line>
            <SideLabel>Sheets</SideLabel>
            <SheetList>
              {SHEETS.map(([name, used]) => (
                <SheetRow key={name}>
                  <SheetIconWrap>
                    <SheetIcon />
                    {used && (
                      <Badge>
                        <TickMini size={11} color="#fff" sw={2} />
                      </Badge>
                    )}
                  </SheetIconWrap>
                  {name}
                </SheetRow>
              ))}
            </SheetList>
          </SideSection>
          <SideSection $h={444} $top={22}>
            <SideLabel>Objects</SideLabel>
            <ObjectGrid>
              {OBJECTS.map(([name, icon]) => (
                <ObjectItem key={name}>
                  <ObjectIcon>{icon}</ObjectIcon>
                  {name}
                </ObjectItem>
              ))}
            </ObjectGrid>
            <Toggle>
              <ToggleOption $on>Tiled</ToggleOption>
              <ToggleOption>Floating</ToggleOption>
            </Toggle>
            <TitleCheck>
              <CheckBox>
                <TickMini size={22} color="#555" sw={1.4} />
              </CheckBox>
              Show dashboard title
            </TitleCheck>
          </SideSection>
        </SidePanel>

        <Canvas>
          <Heading>
            <DashTitle>Is Your County Obese?</DashTitle>
            <DashSub>Select your county to see how it compares with other counties in the country</DashSub>
          </Heading>
          <MapRow>
            <MapFrame>
              <CountyMap />
              <ToolCard $top={25} $h={56}>
                <SearchGlass size={30} color="#777" sw={1.7} />
              </ToolCard>
              <ToolCard $top={104} $h={187} $justify="flex-start" $padTop={6}>
                <MapToolBtn><HomeIcon /></MapToolBtn>
                <MapToolBtn $on><MarqueeIcon /></MapToolBtn>
                <MapToolBtn><RadialIcon /></MapToolBtn>
                <MapToolBtn><LassoIcon /></MapToolBtn>
              </ToolCard>
              <Attribution>© 2021 Mapbox © OpenStreetMap</Attribution>
            </MapFrame>
            <FilterPanel>
              <FilterLabel>Select Region:</FilterLabel>
              <RadioList>
                {REGIONS.map((r, i) => (
                  <RadioRow key={r}>
                    <RadioDot $on={i === 0} />
                    {r}
                  </RadioRow>
                ))}
              </RadioList>
              <FilterLabel $mt={23}>Select State:</FilterLabel>
              <StateInput>
                State のハイライト
                <SearchGlass size={20} color="#666" sw={2} />
              </StateInput>
              <FilterLabel $mt={29}>Obesity Rate:</FilterLabel>
              <LegendRow>
                11%
                <LegendBar>
                  {LEGEND.map((w, i) => (
                    <LegendStep key={PALETTE[i]} $w={w} $c={PALETTE[i]} />
                  ))}
                </LegendBar>
                47%
              </LegendRow>
            </FilterPanel>
          </MapRow>
          <CorrelationTitle>Obesity’s correlation with diet, exercise, and smoking (% of pop.) - すべて</CorrelationTitle>
          <ScatterChart />
        </Canvas>
      </Main>

      <TabBar>
        <DataSourceTab><DbSmall />Data Source</DataSourceTab>
        <SheetTab $w={149} $active $pad={19}><TabGrid color="#333" />Obesity</SheetTab>
        <SheetTab $w={108}>College</SheetTab>
        <SheetTab $w={290} $pad={20}><TabGrid />Global Temperatures</SheetTab>
        <SheetTab $w={166}>Flight Delays</SheetTab>
        <SheetTab $w={166} $pad={21}><TabGrid />Economy</SheetTab>
        <SheetTab $w={104}>Stocks</SheetTab>
        <SheetTab $w={61} $pad={17}><NewSheetIcon /></SheetTab>
        <SheetTab $w={62} $pad={17}><NewDashIcon /></SheetTab>
        <SheetTab $w={61} $pad={17}><NewStoryIcon /></SheetTab>
      </TabBar>
      <StatusBar />

      <TourFrame>
        <TourButton>
          <PlayCircle />
          Interactive Tours
        </TourButton>
      </TourFrame>
    </Page>
  );
}
